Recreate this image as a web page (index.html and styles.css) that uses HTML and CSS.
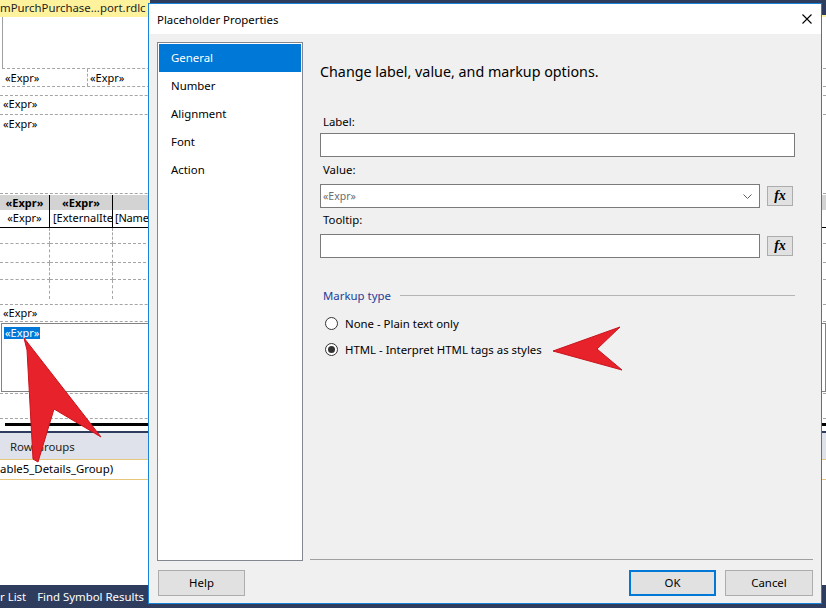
FILE: index.html
```html
<!DOCTYPE html>
<html>
<head>
<meta charset="utf-8">
<title>Placeholder Properties</title>
<link rel="stylesheet" href="styles.css">
</head>
<body>
<div class="screen">
  <div class="designer">
    <div class="tabbar"><div class="doctab">mPurchPurchase...port.rdlc</div></div>
    <div class="r-top"></div>
    <div class="r-two"><div class="c1">«Expr»</div><div class="c2">«Expr»</div></div>
    <div class="gap8"></div>
    <div class="r-expr">«Expr»</div>
    <div class="r-expr2">«Expr»</div>
    <div class="r-dash"></div>
    <div class="tbl">
      <div class="th">«Expr»</div><div class="th">«Expr»</div><div class="th last"></div>
      <div class="td center">«Expr»</div><div class="td">[ExternalIte</div><div class="td last">[Name]</div>
      <div class="te h16"></div><div class="te h16"></div><div class="te h16 last"></div>
      <div class="te h19"></div><div class="te h19"></div><div class="te h19 last"></div>
      <div class="te h17"></div><div class="te h17"></div><div class="te h17 last"></div>
      <div class="te h19 nob"></div><div class="te h19 nob"></div><div class="te h19 nob last"></div>
    </div>
    <div class="sp5"></div>
    <div class="r-expr3">«Expr»</div>
    <div class="sp1"></div>
    <div class="r-box"><span class="sel">«Expr»</span></div>
    <div class="sp1"></div>
    <div class="r-after"></div>
    <div class="sp4"></div>
    <div class="blackline"></div>
    <div class="sp5"></div>
    <div class="navyline"></div>
    <div class="rowgroups">Row Groups</div>
    <div class="grouprow">able5_Details_Group)</div>
    <div class="filler"></div>
    <div class="statusbar"><span>r List</span><span>Find Symbol Results</span></div>
  </div>

  <div class="dialog">
    <div class="titlebar">
      <span class="title">Placeholder Properties</span>
      <svg class="close" width="10" height="10" viewBox="0 0 10 10"><path d="M0.5 0.5 L9.5 9.5 M9.5 0.5 L0.5 9.5" stroke="#000" stroke-width="1.1" fill="none"/></svg>
    </div>
    <div class="dbody">
      <div class="main">
        <div class="nav">
          <div class="navitem active">General</div>
          <div class="navitem">Number</div>
          <div class="navitem">Alignment</div>
          <div class="navitem">Font</div>
          <div class="navitem">Action</div>
        </div>
        <div class="panel">
          <div class="heading">Change label, value, and markup options.</div>
          <div class="lbl l1">Label:</div>
          <div class="tbox full b1"></div>
          <div class="lbl l2">Value:</div>
          <div class="frow r2">
            <div class="combo"><span class="ph">«Expr»</span>
              <svg class="chev" width="9" height="5" viewBox="0 0 9 5"><path d="M0.5 0.5 L4.5 4.5 L8.5 0.5" stroke="#606060" fill="none"/></svg>
            </div>
            <div class="fx">fx</div>
          </div>
          <div class="lbl l3">Tooltip:</div>
          <div class="frow r3">
            <div class="tbox part"></div>
            <div class="fx">fx</div>
          </div>
          <div class="grouphead"><span class="gtitle">Markup type</span><span class="gline"></span></div>
          <div class="radio rd1"><span class="circle"></span><span>None - Plain text only</span></div>
          <div class="radio rd2"><span class="circle on"></span><span>HTML - Interpret HTML tags as styles</span></div>
        </div>
      </div>
      <div class="buttons">
        <div class="btn help">Help</div>
        <div class="btngroup">
          <div class="btn ok">OK</div>
          <div class="btn cancel">Cancel</div>
        </div>
      </div>
    </div>
  </div>

  <svg class="arrows" width="826" height="608" viewBox="0 0 826 608">
    <polygon points="24,338 101,437 54,409 38,462 33,459 27,350" fill="#e8222b" stroke="#c8141c" stroke-width="1" stroke-linejoin="round"/>
    <polygon points="553,351 620,327 597,349 622,370" fill="#e8222b" stroke="#c8141c" stroke-width="1" stroke-linejoin="round"/>
  </svg>
</div>
</body>
</html>
```
FILE: styles.css
```css
* { box-sizing: border-box; margin: 0; padding: 0; }
body { margin: 0; width: 826px; height: 608px; overflow: hidden; background: #fff;
  font-family: "Noto Sans", "Open Sans", sans-serif; font-size: 11.4px; color: #000; }
.screen { position: relative; width: 826px; height: 608px; overflow: hidden; }

/* background report designer */
.designer { display: flex; flex-direction: column; height: 608px; font-size: 11px; color: #000; background: #fff; }
.tabbar { height: 17px; flex: none; background: linear-gradient(#2e3d5e 0 15px, #fff29d 15px 17px); }
.doctab { width: 150px; height: 17px; background: #fff29d; font-size: 11.4px; line-height: 16px; white-space: nowrap; color: #1e1e1e; }
.r-top { height: 51px; flex: none; margin-left: 2px; border-left: 1px solid #a0a0a0; }
.r-two { height: 19px; flex: none; display: flex; border-top: 1px dashed #a5a5a5; border-bottom: 1px dashed #a5a5a5; margin-left: 2px; line-height: 17px; }
.c1 { width: 86px; border-right: 1px dashed #a5a5a5; padding-left: 3px; }
.c2 { padding-left: 2px; }
.gap8 { height: 8px; flex: none; }
.r-expr { height: 19px; flex: none; border-top: 1px dashed #a5a5a5; padding-left: 3px; line-height: 15px; }
.r-expr2 { height: 79px; flex: none; border-top: 1px dashed #a5a5a5; padding-left: 3px; line-height: 17px; }
.r-dash { height: 2px; flex: none; border-top: 1px dashed #a5a5a5; }
.tbl { display: grid; grid-template-columns: 50px 63px 1fr; flex: none; }
.th { height: 15px; background: #d3d3d3; font-weight: bold; text-align: center; line-height: 15px; border-right: 1px solid #000; }
.td { height: 18px; line-height: 16px; border-right: 1px solid #000; border-bottom: 1px solid #000; padding-left: 3px; white-space: nowrap; overflow: hidden; }
.td.center { text-align: center; padding-left: 0; }
.td.last { padding-left: 2px; letter-spacing: -0.2px; }
.te { border-right: 1px dashed #a5a5a5; border-bottom: 1px dashed #a5a5a5; }
.te.nob { border-bottom: 0; }
.th.last, .td.last, .te.last { border-right: 0; }
.h16 { height: 16px; } .h17 { height: 17px; } .h19 { height: 19px; }
.sp1 { height: 1px; flex: none; } .sp4 { height: 4px; flex: none; } .sp5 { height: 5px; flex: none; }
.r-expr3 { height: 18px; flex: none; border-top: 1px dashed #a5a5a5; border-bottom: 1px dashed #a5a5a5; padding-left: 3px; line-height: 16px; }
.r-box { height: 69px; flex: none; margin-left: 1px; border: 1px solid #828282; padding: 1px 0 0 2px; }
.sel { display: inline-block; background: #0078d7; color: #fff; line-height: 12px; padding: 0 1px; }
.r-after { height: 26px; flex: none; border-top: 1px dashed #a5a5a5; border-bottom: 1px dashed #a5a5a5; }
.blackline { height: 3px; flex: none; margin-left: 5px; background: #000; }
.navyline { height: 2px; flex: none; background: #2e3d5e; }
.rowgroups { height: 26px; flex: none; background: #dfe2ea; padding-left: 10px; line-height: 27px; font-size: 11.4px; color: #1e1e1e; }
.grouprow { height: 21px; flex: none; border-top: 1px solid #e6c77c; border-bottom: 1px solid #e6c77c; line-height: 18px; font-size: 11.4px; white-space: nowrap; }
.filler { flex: 1; }
.statusbar { height: 23px; flex: none; background: #2e3d5e; color: #fff; font-size: 11.4px; line-height: 23px; display: flex; gap: 11px; white-space: nowrap; }

/* dialog window */
.dialog { position: absolute; left: 148px; top: 3px; width: 674px; height: 601px; border: 1px solid #1883d7; background: #f0f0f0; display: flex; flex-direction: column; }
.titlebar { height: 30px; flex: none; background: #fff; display: flex; align-items: center; justify-content: space-between; padding: 0 9px 0 8px; }
.title { font-size: 11.4px; color: #000; }
.close { display: block; }
.dbody { flex: 1; padding: 8px 8px 7px 8px; display: flex; flex-direction: column; }
.main { height: 519px; display: grid; grid-template-columns: 146px 1fr; column-gap: 7px; }
.nav { background: #fff; border: 1px solid #828790; padding: 1px; }
.navitem { height: 28px; line-height: 28px; padding-left: 12px; font-size: 11.4px; }
.navitem.active { background: #0078d7; color: #fff; }
.panel { border-bottom: 1px solid #a0a0a0; height: 518px; padding: 0 18px 0 10px; display: flex; flex-direction: column; }
.heading { margin-top: 20px; height: 20px; line-height: 20px; font-size: 14.3px; color: #000; }
.lbl { height: 16px; line-height: 16px; padding-left: 3px; font-size: 11.4px; }
.l1 { margin-top: 32px; }
.l2 { margin-top: 5px; }
.l3 { margin-top: 4px; }
.tbox { height: 24px; background: #fff; border: 1px solid #7a7a7a; }
.b1 { margin-top: 3px; }
.frow { display: flex; align-items: center; gap: 7px; height: 24px; margin-top: 6px; }
.combo { width: 440px; height: 24px; background: #fff; border: 1px solid #7a7a7a; display: flex; align-items: center; justify-content: space-between; padding: 0 7px 0 2px; }
.ph { font-size: 10.5px; color: #6d6d6d; }
.chev { display: block; }
.part { width: 440px; }
.fx { width: 26px; height: 20px; background: #e1e1e1; border: 1px solid #adadad; font-family: "Liberation Serif", serif; font-style: italic; font-weight: bold; font-size: 14px; line-height: 17px; text-align: center; }
.grouphead { margin-top: 30px; height: 16px; display: flex; align-items: center; padding-left: 3px; }
.gtitle { color: #1f3d99; font-size: 11.4px; line-height: 16px; }
.gline { flex: 1; margin-left: 9px; border-top: 1px solid #b5b5b5; margin-top: -1px; }
.radio { height: 16px; display: flex; align-items: center; gap: 7px; padding-left: 5px; font-size: 11.4px; }
.rd1 { margin-top: 11px; }
.rd2 { margin-top: 10px; }
.circle { width: 13px; height: 13px; flex: none; border-radius: 50%; border: 1px solid #333; background: #fff; display: flex; align-items: center; justify-content: center; }
.circle.on::after { content: ""; width: 7px; height: 7px; border-radius: 50%; background: #333; }
.buttons { margin-top: 9px; height: 26px; display: flex; justify-content: space-between; }
.btngroup { display: flex; gap: 9px; }
.btn { width: 87px; height: 26px; background: #e1e1e1; border: 1px solid #adadad; text-align: center; line-height: 24px; font-size: 11.4px; }
.help { margin-left: 1px; }
.ok { border: 2px solid #0078d7; line-height: 22px; }
.cancel { width: 88px; }

.arrows { position: absolute; left: 0; top: 0; pointer-events: none; }
```
